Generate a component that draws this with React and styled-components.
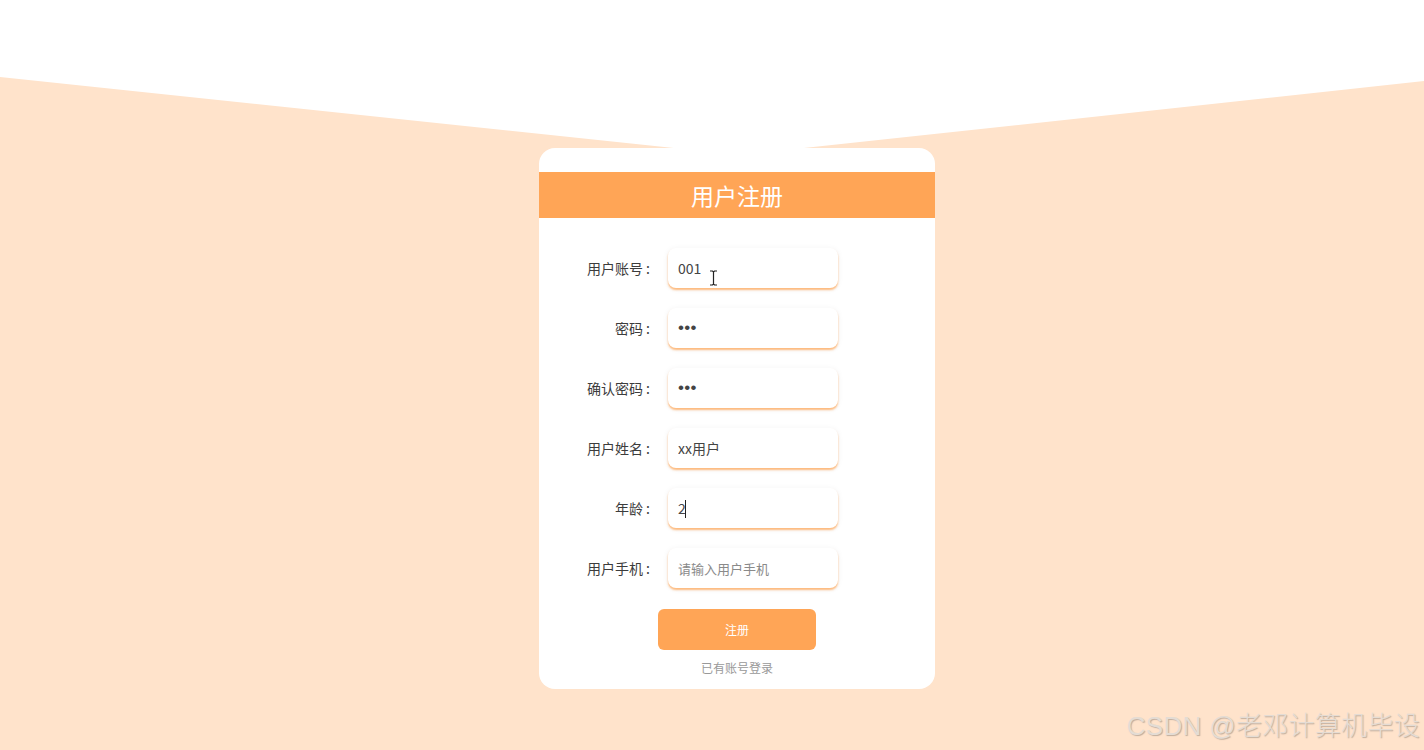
import React from "react";
import styled, { createGlobalStyle } from "styled-components";

const Global = createGlobalStyle`
  html, body { margin: 0; padding: 0; background: #ffffff; }
  body { font-family: "Microsoft YaHei", "Noto Sans CJK SC", "Liberation Sans", sans-serif; }
  * { box-sizing: border-box; }
`;

const Page = styled.div`
  position: relative;
  width: 100%;
  min-height: 750px;
  background: #ffffff;
  overflow: hidden;
`;

const Backdrop = styled.div`
  position: absolute;
  inset: 0;
  background: #ffe3cb;
  clip-path: polygon(0 77px, 740px 155px, 100% 81px, 100% 100%, 0 100%);
`;

const Stage = styled.main`
  position: relative;
  display: flex;
  justify-content: center;
  padding: 148px 0 0 50px;
`;

const Card = styled.section`
  width: 396px;
  height: 541px;
  background: #ffffff;
  border-radius: 16px;
  padding-top: 24px;
  display: flex;
  flex-direction: column;
`;

const Header = styled.h1`
  margin: 0;
  height: 46px;
  background: #ffa556;
  color: #ffffff;
  font-size: 23px;
  font-weight: 400;
  line-height: 46px;
  text-align: center;
`;

const Form = styled.form`
  display: flex;
  flex-direction: column;
  gap: 20px;
  padding-top: 30px;
`;

const Row = styled.div`
  display: flex;
  align-items: center;
  height: 40px;
`;

const Label = styled.label`
  width: 129px;
  padding-right: 18px;
  text-align: right;
  font-size: 14px;
  color: #3c3c3c;
`;

const Colon = styled.span`
  margin-left: 3px;
`;

const Field = styled.input`
  width: 170px;
  height: 40px;
  border: none;
  outline: none;
  border-radius: 8px;
  background: #ffffff;
  padding: 0 10px;
  font-family: ${(p) => (p.type === "password" ? '"Liberation Sans", sans-serif' : "inherit")};
  font-size: ${(p) => (p.type === "password" ? "17px" : "14px")};
  color: #444;
  letter-spacing: ${(p) => (p.type === "password" ? "0.3px" : "0")};
  box-shadow: 0 2px 2px rgba(255, 165, 86, 0.75), 0 1px 6px rgba(0, 0, 0, 0.06);
  &::placeholder {
    color: #8a8a8a;
    font-size: 13px;
  }
`;

const Actions = styled.div`
  display: flex;
  flex-direction: column;
  align-items: center;
  gap: 10px;
  padding-top: 1px;
`;

const Submit = styled.button`
  width: 158px;
  height: 41px;
  border: none;
  border-radius: 6px;
  background: #ffa556;
  color: #ffffff;
  font-family: inherit;
  font-size: 12px;
  cursor: pointer;
`;

const LoginLink = styled.a`
  font-size: 12px;
  color: #999;
  text-decoration: none;
  line-height: 16px;
`;

const Watermark = styled.div`
  position: absolute;
  right: 4px;
  bottom: 8px;
  font-size: 26px;
  color: #e4dcd4;
  text-shadow: 1px 1px 1px rgba(140, 130, 120, 0.55);
  font-family: "Liberation Sans", "Noto Sans CJK SC", sans-serif;
  font-weight: 300;
  letter-spacing: 0.3px;
`;

const Cursor = styled.svg`
  position: absolute;
  left: 709px;
  top: 270px;
  pointer-events: none;
`;

const Caret = styled.span`
  position: absolute;
  left: 685px;
  top: 500px;
  width: 1px;
  height: 18px;
  background: #222;
  pointer-events: none;
`;

const fields = [
  { label: "用户账号", type: "text", value: "001" },
  { label: "密码", type: "password", value: "123" },
  { label: "确认密码", type: "password", value: "123" },
  { label: "用户姓名", type: "text", value: "xx用户" },
  { label: "年龄", type: "text", value: "2" },
  { label: "用户手机", type: "text", value: "", placeholder: "请输入用户手机" },
];

export default function App() {
  return (
    <Page>
      <Global />
      <Backdrop />
      <Stage>
        <Card>
          <Header>用户注册</Header>
          <Form onSubmit={(e) => e.preventDefault()}>
            {fields.map((f) => (
              <Row key={f.label}>
                <Label>
                  {f.label}
                  <Colon>:</Colon>
                </Label>
                <Field
                  type={f.type}
                  defaultValue={f.value}
                  placeholder={f.placeholder}
                />
              </Row>
            ))}
            <Actions>
              <Submit type="submit">注册</Submit>
              <LoginLink href="#">已有账号登录</LoginLink>
            </Actions>
          </Form>
        </Card>
      </Stage>
      <Cursor width="9" height="16" viewBox="0 0 9 16">
        <path d="M1 1h2.5L4.5 2 5.5 1H8M4.5 2v12M1 15h2.5l1-1 1 1H8" stroke="#222" strokeWidth="1.2" fill="none" />
      </Cursor>
      <Caret />
      <Watermark>CSDN @老邓计算机毕设</Watermark>
    </Page>
  );
}
